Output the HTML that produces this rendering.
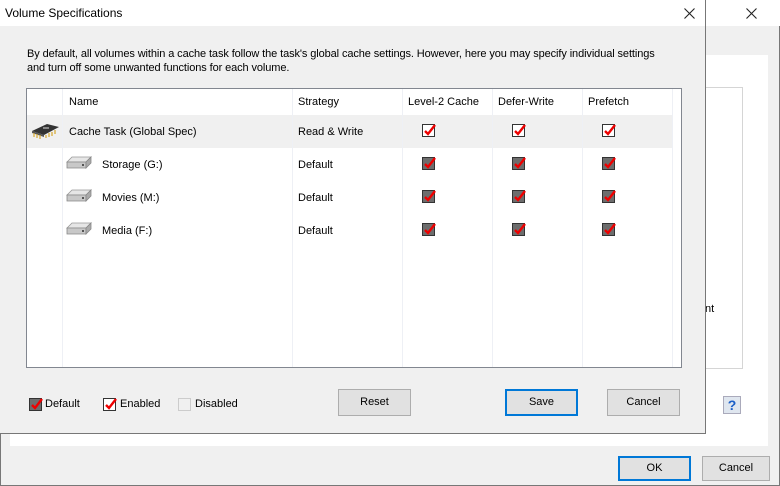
<!DOCTYPE html>
<html><head><style>
*{margin:0;padding:0;box-sizing:border-box}
body{width:780px;height:486px;position:relative;overflow:hidden;background:#f0f0f0;font-family:"Liberation Sans",sans-serif;font-size:11px;color:#000}
.a{position:absolute}
.btn{position:absolute;background:#e1e1e1;border:1px solid #adadad;text-align:center;line-height:25px;font-size:11px}
.cb{position:absolute;width:13px;height:13px;border:1px solid #333}
.cb svg{position:absolute;left:0;top:-1px}
.vl{position:absolute;top:0;bottom:0;width:1px;background:#eef0f5}
</style></head><body>
<div class="a" style="left:0;top:0;width:780px;height:486px;border:1px solid #777;border-top:none;background:#f0f0f0"></div>
<div class="a" style="left:0;top:0;width:780px;height:26px;background:#fff"></div>
<svg class="a" style="left:746px;top:8px" width="11" height="11"><path d="M0.5 0.5L10.5 10.5M10.5 0.5L0.5 10.5" stroke="#222" stroke-width="1.1"/></svg>
<div class="a" style="left:10px;top:55px;width:758px;height:391px;background:#fff"></div>
<div class="a" style="left:600px;top:87px;width:143px;height:282px;border:1px solid #d5d5d5"></div>
<div class="a" style="left:705px;top:303px">nt</div>
<div class="a" style="left:723px;top:396px;width:18px;height:18px;background:#dfe6ef;border:1px solid #aab;color:#1a5fc8;font-weight:bold;font-size:14px;text-align:center;line-height:16px">?</div>
<div class="btn" style="left:618px;top:456px;width:73px;height:25px;border:2px solid #0078d7;line-height:21px">OK</div>
<div class="btn" style="left:702px;top:456px;width:68px;height:25px;line-height:23px">Cancel</div>

<div class="a" style="left:0;top:0;width:706px;height:434px;background:#f0f0f0;border-right:1px solid #777;border-bottom:1px solid #777">
 <div class="a" style="left:0;top:0;width:705px;height:26px;background:#fff"></div>
 <div class="a" style="left:5px;top:6px;font-size:12px">Volume Specifications</div>
 <svg class="a" style="left:684px;top:8px" width="11" height="11"><path d="M0.5 0.5L10.5 10.5M10.5 0.5L0.5 10.5" stroke="#222" stroke-width="1.1"/></svg>
 <div class="a" style="left:27px;top:47px;line-height:14px;letter-spacing:-0.1px">By default, all volumes within a cache task follow the task's global cache settings. However, here you may specify individual settings<br>and turn off some unwanted functions for each volume.</div>
 <div class="a" style="left:26px;top:88px;width:656px;height:280px;background:#fff;border:1px solid #828790">
  <div class="a" style="left:0;top:26px;width:645px;height:33px;background:#f0f0f0"></div>
  <div class="vl" style="left:35px"></div><div class="vl" style="left:265px"></div><div class="vl" style="left:375px"></div><div class="vl" style="left:465px"></div><div class="vl" style="left:555px"></div><div class="vl" style="left:645px"></div>
  <div class="a" style="left:42px;top:7px">Name</div>
  <div class="a" style="left:271px;top:7px">Strategy</div>
  <div class="a" style="left:381px;top:7px">Level-2 Cache</div>
  <div class="a" style="left:471px;top:7px">Defer-Write</div>
  <div class="a" style="left:561px;top:7px">Prefetch</div>
  <svg class="a" style="left:2px;top:32px" width="32" height="18"><polygon points="3,10 18,3 30,6 15,14" fill="#333"/><polygon points="3,10 15,14 15,16 3,12" fill="#555"/><g stroke="#d4a62a" stroke-width="1.2"><line x1="5" y1="12" x2="5" y2="16"/><line x1="8" y1="13" x2="8" y2="17"/><line x1="11" y1="14" x2="11" y2="18"/><line x1="17" y1="14" x2="17" y2="17"/><line x1="20" y1="12" x2="20" y2="16"/><line x1="23" y1="11" x2="23" y2="15"/><line x1="26" y1="9" x2="26" y2="13"/></g><rect x="14" y="6" width="6" height="2" fill="#888"/></svg>
  <div class="a" style="left:42px;top:37px">Cache Task (Global Spec)</div>
  <div class="a" style="left:271px;top:37px">Read &amp; Write</div>
  <div class="a" style="left:75px;top:70px">Storage (G:)</div><div class="a" style="left:271px;top:70px">Default</div>
  <div class="a" style="left:75px;top:103px">Movies (M:)</div><div class="a" style="left:271px;top:103px">Default</div>
  <div class="a" style="left:75px;top:136px">Media (F:)</div><div class="a" style="left:271px;top:136px">Default</div>
 </div>
 <div id="d"></div>
 <div class="cb" style="left:29px;top:398px;background:#6d6d6d"><svg width="13" height="13"><path d="M2 7 L5 10 L12 1" stroke="#e00" stroke-width="2.4" fill="none"/></svg></div>
 <div class="a" style="left:45px;top:398px">Default</div>
 <div class="cb" style="left:103px;top:398px;background:#fff"><svg width="13" height="13"><path d="M2 7 L5 10 L12 1" stroke="#e00" stroke-width="2.4" fill="none"/></svg></div>
 <div class="a" style="left:120px;top:398px">Enabled</div>
 <div class="cb" style="left:178px;top:398px;border-color:#ccc;background:#f0f0f0"></div>
 <div class="a" style="left:195px;top:398px">Disabled</div>
 <div class="btn" style="left:338px;top:389px;width:73px;height:27px">Reset</div>
 <div class="btn" style="left:505px;top:389px;width:73px;height:27px;border:2px solid #0078d7;line-height:23px">Save</div>
 <div class="btn" style="left:607px;top:389px;width:73px;height:27px">Cancel</div>
</div>
<script>
var h='';var xs=[422,512,602],ys=[124,157,190,223];
ys.forEach(function(y,i){xs.forEach(function(x){h+='<div class="cb" style="left:'+x+'px;top:'+y+'px;background:'+(i?'#6d6d6d':'#fff')+'"><svg width="13" height="13"><path d="M2 7 L5 10 L12 1" stroke="#e00" stroke-width="2.4" fill="none"/></svg></div>';});});
ys.slice(1).forEach(function(y){h+='<svg class="a" style="left:64px;top:'+(y-2)+'px" width="30" height="16"><path d="M3 7 L8 2 L27 2 L22 7 Z" fill="#e6e6e6" stroke="#999" stroke-width=".8"/><path d="M3 7 L22 7 L22 13 L3 13 Z" fill="#c8c8c8" stroke="#888" stroke-width=".8"/><path d="M22 7 L27 2 L27 8 L22 13 Z" fill="#aaa" stroke="#888" stroke-width=".8"/><rect x="18" y="9" width="2" height="2" fill="#555"/></svg>';});
document.getElementById('d').innerHTML=h;
</script>
</body></html>
